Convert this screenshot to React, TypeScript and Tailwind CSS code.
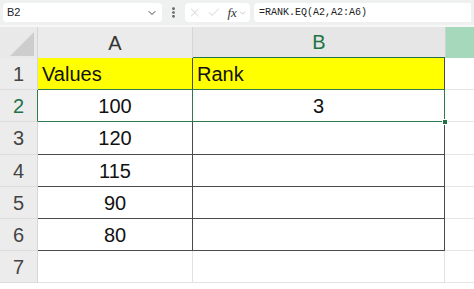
import { ChevronDown, X, Check, EllipsisVertical } from 'lucide-react';

const font = { fontFamily: '"Liberation Sans", Arial, sans-serif' };

type Row = {
  n: number;
  a: string;
  b: string;
  yellow?: boolean;
  sel?: boolean;
  inTable?: boolean;
  h: string;
};

const rows: Row[] = [
  { n: 1, a: 'Values', b: 'Rank', yellow: true, inTable: true, h: 'h-[32px]' },
  { n: 2, a: '100', b: '3', sel: true, inTable: true, h: 'h-[32px]' },
  { n: 3, a: '120', b: '', inTable: true, h: 'h-[33px]' },
  { n: 4, a: '115', b: '', inTable: true, h: 'h-[32px]' },
  { n: 5, a: '90', b: '', inTable: true, h: 'h-[32px]' },
  { n: 6, a: '80', b: '', inTable: true, h: 'h-[32px]' },
  { n: 7, a: '', b: '', h: 'h-[32px]' },
];

function TopBar() {
  return (
    <div className="flex items-center h-[25px] bg-[#eef1ef] px-[3px] gap-[4px]">
      <div className="flex items-center w-[159px] h-[19px] bg-white rounded-[4px] pl-[4px] pr-[4px]">
        <span className="text-[11px] text-[#222] flex-1" style={font}>B2</span>
        <ChevronDown size={12} strokeWidth={2} className="text-[#444]" />
      </div>
      <EllipsisVertical size={13} strokeWidth={3} className="text-[#555] mx-[1px]" />
      <div className="flex items-center w-[65px] h-[19px] bg-white rounded-[4px] px-[3px] gap-[3px]">
        <X size={15} strokeWidth={1.2} className="text-[#bdbdbd]" />
        <Check size={15} strokeWidth={1.2} className="text-[#bdbdbd] ml-[2px]" />
        <span
          className="italic text-[13px] text-[#333] ml-[4px] leading-none"
          style={{ fontFamily: '"Liberation Serif", serif' }}
        >
          fx
        </span>
        <ChevronDown size={10} strokeWidth={1.5} className="text-[#999] -ml-[2px]" />
      </div>
      <div className="flex items-center flex-1 h-[19px] bg-white rounded-l-[4px] pl-[5px]">
        <span className="text-[10px] text-[#222]" style={{ fontFamily: '"Liberation Mono", monospace' }}>
          =RANK.EQ(A2,A2:A6)
        </span>
      </div>
    </div>
  );
}

function HeaderRow() {
  return (
    <div className="grid grid-cols-[38px_155px_252px_1fr] h-[31px]" style={font}>
      <div className="bg-[#e9e9e9] border-r border-[#d6d6d6] relative">
        <svg className="absolute right-[3px] bottom-[3px]" width="24" height="24" viewBox="0 0 24 24">
          <polygon points="24,0 24,24 0,24" fill="#cdcdcd" />
        </svg>
      </div>
      <div className="bg-[#ebebeb] border-r border-r-[#d6d6d6] border-b border-b-[#e3e6a8] flex items-center justify-center text-[20px] text-[#333]">
        A
      </div>
      <div className="bg-[#e6e6e6] border-b-2 border-b-[#217346] flex items-center justify-center text-[20px] text-[#217346]">
        B
      </div>
      <div className="bg-[#a6d8bc] border-l border-l-[#d0d0d0]" />
    </div>
  );
}

function DataRow({ r }: { r: Row }) {
  const right = r.sel ? 'border-r-[#2f7a4f]' : r.inTable ? 'border-r-[#4a4a4a]' : 'border-r-[#e2e2e2]';
  const bottom =
    r.n === 1 || r.sel ? 'border-b-[#2f7a4f]' : r.inTable ? 'border-b-[#4a4a4a]' : 'border-b-[#e2e2e2]';
  const rowHead = r.sel ? 'text-[#217346] border-r-[#2f7a4f]' : 'text-[#444] border-r-[#d6d6d6]';
  const cell = `border-r border-b ${right} ${bottom} flex items-center text-[20px] text-[#111] ${
    r.yellow ? 'bg-[#ffff00] justify-start pl-[4px]' : 'bg-white justify-center'
  }`;
  return (
    <div className={`grid grid-cols-[38px_155px_252px_1fr] ${r.h}`} style={font}>
      <div
        className={`bg-[#ececec] border-r border-b border-b-[#dcdcdc] flex items-center justify-center text-[20px] ${rowHead}`}
      >
        {r.n}
      </div>
      <div className={cell}>{r.a}</div>
      <div className={`relative ${cell}`}>
        {r.b}
        {r.sel && (
          <div className="absolute -right-[4px] -bottom-[4px] w-[6px] h-[6px] bg-[#217346] border border-white z-10" />
        )}
      </div>
      <div className="bg-white border-b border-b-[#e6e6e6]" />
    </div>
  );
}

export default function App() {
  return (
    <div className="w-[474px] h-[289px] overflow-hidden bg-white">
      <TopBar />
      <div className="h-[2px] bg-[#f6f7f6]" />
      <HeaderRow />
      {rows.map((r) => (
        <DataRow key={r.n} r={r} />
      ))}
    </div>
  );
}
